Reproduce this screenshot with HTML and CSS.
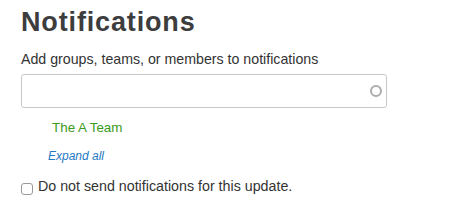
FILE: index.html
```html
<!DOCTYPE html>
<html lang="en">
<head>
  <meta charset="UTF-8">
  <title>Notifications</title>
  <link rel="stylesheet" href="styles.css">
</head>
<body>
  <div class="panel">
    <h1>Notifications</h1>
    <p class="hint">Add groups, teams, or members to notifications</p>

    <!-- picker -->
    <div class="picker">
      <input type="text" class="picker-input">
      <span class="spinner"></span>
    </div>

    <div class="team">The A Team</div>
    <a class="expand" href="#">Expand all</a>

    <label class="skip">
      <input type="checkbox">
      <span>Do not send notifications for this update.</span>
    </label>
  </div>
</body>
</html>
```

FILE: styles.css
```css
/* ----- base ----- */
body {
  margin: 0;
  background: #fff;
  font-family: "Liberation Sans", Arial, sans-serif;
  color: #333;
}

.panel {
  padding-left: 21px;
  display: flex;
  flex-direction: column;
  align-items: flex-start;
}

h1 {
  margin: 6px 0 0;
  font-size: 27px;
  line-height: 32px;
  font-weight: bold;
  letter-spacing: 0.85px;
  color: #3d3d3d;
}

.hint {
  margin: 11px 0 0;
  font-size: 14.2px;
  line-height: 20px;
}

/* ----- picker ----- */
.picker {
  margin-top: 5px;
  box-sizing: border-box;
  width: 366px;
  height: 34px;
  border: 1px solid #c8c8c8;
  border-radius: 3px;
  display: flex;
  align-items: center;
  padding: 0 4px 0 0;
}

.picker-input {
  flex: 1;
  border: none;
  outline: none;
  height: 100%;
  background: transparent;
  font: inherit;
}

.spinner {
  box-sizing: border-box;
  width: 12px;
  height: 12px;
  border: 2px solid #acacac;
  border-radius: 50%;
}

.team {
  margin: 11px 0 0 31px;
  font-size: 13.4px;
  line-height: 18px;
  color: #3a9a1c;
}

.expand {
  margin: 11px 0 0 27px;
  font-size: 12px;
  line-height: 16px;
  font-style: italic;
  color: #1f7ac4;
  text-decoration: none;
}

/* ----- checkbox row ----- */
.skip {
  margin-top: 12px;
  display: flex;
  align-items: flex-start;
  gap: 5px;
  font-size: 14.25px;
  line-height: 20px;
}

.skip input {
  appearance: none;
  margin: 7px 0 0;
  width: 12px;
  height: 12px;
  border: 1px solid #9a9a9a;
  border-radius: 3px;
  background: #fff;
}
```
